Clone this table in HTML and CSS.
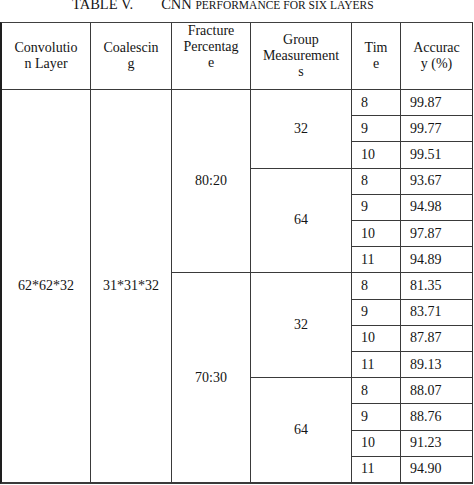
FILE: index.html
```html
<!DOCTYPE html>
<html lang="en">
<head>
<meta charset="utf-8">
<title>Table V. CNN performance for six layers</title>
<link rel="stylesheet" href="styles.css">
</head>
<body>
<div class="caption">
  <span class="caption-num">TABLE V.</span>
  <span class="caption-title">CNN <span class="caption-small">PERFORMANCE FOR SIX LAYERS</span></span>
</div>
<div class="table">
  <div class="cell head">Convolutio<br>n Layer</div>
  <div class="cell head">Coalescin<br>g</div>
  <div class="cell head head-top">Fracture<br>Percentag<br>e</div>
  <div class="cell head">Group<br>Measurement<br>s</div>
  <div class="cell head">Tim<br>e</div>
  <div class="cell head">Accurac<br>y (%)</div>

  <div class="cell center span-all c1">62*62*32</div>
  <div class="cell center span-all c2">31*31*32</div>
  <div class="cell center frac-a">80:20</div>
  <div class="cell center grp-a">32</div>
  <div class="cell num">8</div><div class="cell num">99.87</div>
  <div class="cell num">9</div><div class="cell num">99.77</div>
  <div class="cell num">10</div><div class="cell num">99.51</div>
  <div class="cell center grp-b">64</div>
  <div class="cell num">8</div><div class="cell num">93.67</div>
  <div class="cell num">9</div><div class="cell num">94.98</div>
  <div class="cell num">10</div><div class="cell num">97.87</div>
  <div class="cell num">11</div><div class="cell num">94.89</div>
  <div class="cell center frac-b">70:30</div>
  <div class="cell center grp-c">32</div>
  <div class="cell num">8</div><div class="cell num">81.35</div>
  <div class="cell num">9</div><div class="cell num">83.71</div>
  <div class="cell num">10</div><div class="cell num">87.87</div>
  <div class="cell num">11</div><div class="cell num">89.13</div>
  <div class="cell center grp-d">64</div>
  <div class="cell num">8</div><div class="cell num">88.07</div>
  <div class="cell num">9</div><div class="cell num">88.76</div>
  <div class="cell num">10</div><div class="cell num">91.23</div>
  <div class="cell num">11</div><div class="cell num">94.90</div>
</div>
</body>
</html>
```
FILE: styles.css
```css
html, body {
  margin: 0;
  padding: 0;
  background: #ffffff;
}
body {
  font-family: "Liberation Serif", "Times New Roman", serif;
  color: #151515;
  width: 474px;
  height: 485px;
  overflow: hidden;
}
.caption {
  height: 22px;
  display: flex;
  align-items: flex-start;
  padding-left: 72px;
  gap: 28px;
  font-size: 14.5px;
  line-height: 8px;
  white-space: nowrap;
}
.caption-small {
  font-size: 11.5px;
}
.table {
  width: 473px;
  box-sizing: border-box;
  display: grid;
  grid-template-columns: 88px 80px 78px 100px 48px 71px;
  grid-template-rows: 66px repeat(15, 1fr);
  height: 462px;
  gap: 1px;
  background: #3a3a3a;
  border-top: 1px solid #404040;
  border-left: 2px solid #1e1e1e;
  border-right: 1px solid #2e2e2e;
  border-bottom: 2px solid #3a3a3a;
}
.cell {
  background: #ffffff;
  font-size: 14px;
  line-height: 16px;
  display: flex;
  align-items: center;
}
.head {
  justify-content: center;
  text-align: center;
}
.head-top {
  align-items: flex-start;
}
.center {
  justify-content: center;
}
.num {
  padding-left: 9px;
}
.span-all {
  grid-row: 2 / 17;
}
.c1 { grid-column: 1; }
.c2 { grid-column: 2; }
.frac-a { grid-column: 3; grid-row: 2 / 9; }
.frac-b { grid-column: 3; grid-row: 9 / 17; }
.grp-a { grid-column: 4; grid-row: 2 / 5; }
.grp-b { grid-column: 4; grid-row: 5 / 9; }
.grp-c { grid-column: 4; grid-row: 9 / 13; }
.grp-d { grid-column: 4; grid-row: 13 / 17; }
```
